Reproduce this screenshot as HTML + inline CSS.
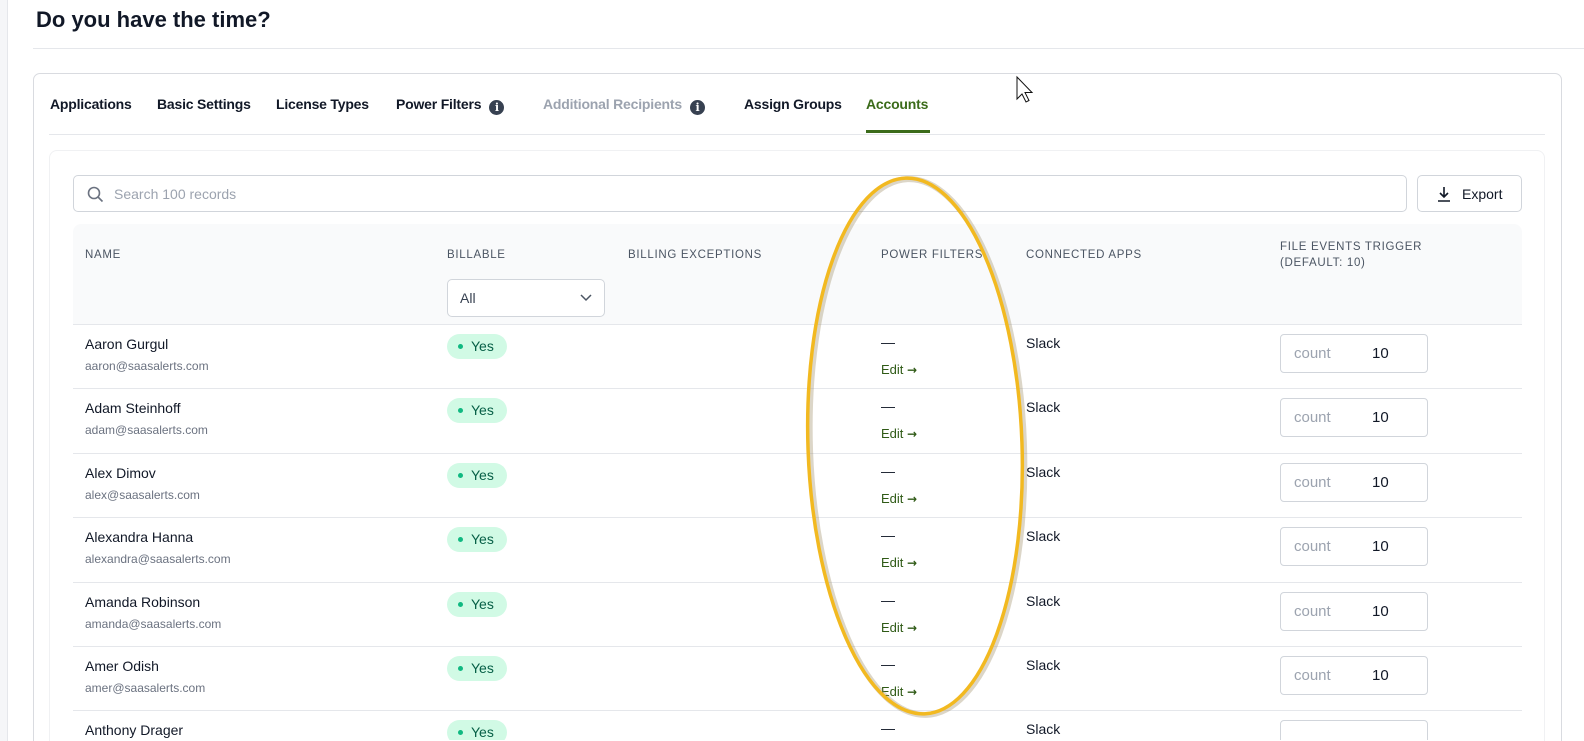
<!DOCTYPE html>
<html style="width:1584px;height:741px;overflow:hidden"><head><style>
*{box-sizing:border-box;margin:0;padding:0}
body{width:1584px;height:741px;overflow:hidden;background:#fff;font-family:"Liberation Sans",sans-serif;color:#111827;position:relative}
.strip{position:absolute;left:0;top:0;width:8px;height:741px;background:#f5f6f8;border-right:1px solid #e5e7eb}
h1{position:absolute;left:36px;top:7px;font-size:22px;font-weight:bold;color:#111827}
.hr{position:absolute;left:33px;right:0;top:48px;height:1px;background:#e5e7eb}
.card{position:absolute;left:33px;top:73px;width:1529px;height:690px;border:1px solid #d9dbe0;border-radius:7px}
.tab{position:absolute;top:96px;font-size:14px;font-weight:bold;color:#111827;white-space:nowrap;letter-spacing:-.2px}
.info{display:inline-block;width:15px;height:15px;border-radius:50%;background:#374151;color:#fff;font-size:11px;text-align:center;line-height:15px;vertical-align:-2px;margin-left:8px;font-family:"DejaVu Serif",serif;font-weight:bold}
.sep{position:absolute;left:49px;top:134px;width:1496px;height:1px;background:#e5e7eb}
.ul{position:absolute;left:866px;top:130px;width:64px;height:3px;background:#3b6b1a}
.panel{position:absolute;left:49px;top:150px;width:1496px;height:610px;border:1px solid #f0f1f3;border-radius:8px}
.search{position:absolute;left:73px;top:175px;width:1334px;height:37px;border:1px solid #d1d5db;border-radius:5px}
.search span{position:absolute;left:40px;top:10px;font-size:14px;color:#9ca3af}
.export{position:absolute;left:1417px;top:175px;width:105px;height:37px;border:1px solid #d1d5db;border-radius:5px;font-size:14px;color:#111827}
.thead{position:absolute;left:73px;top:224px;width:1449px;height:101px;background:#f9fafb;border-radius:8px 8px 0 0;border-bottom:1px solid #e5e7eb}
.th{position:absolute;font-size:11.5px;letter-spacing:.7px;color:#4b5563;line-height:16px}
.sel{position:absolute;left:447px;top:279px;width:158px;height:38px;border:1px solid #d1d5db;border-radius:5px;background:#fff;font-size:14px;color:#374151}
.row{position:absolute;left:73px;width:1449px;height:64.4px;border-bottom:1px solid #e5e7eb}
.nm{position:absolute;left:12px;top:11px;font-size:14px;color:#111827}
.em{position:absolute;left:12px;top:34px;font-size:12px;color:#6b7280}
.yes{position:absolute;left:374px;top:9px;width:60px;height:25px;border-radius:13px;background:#d1fae5;font-size:14px;color:#065f46;line-height:25px;padding-left:24px}
.yes:before{content:"";position:absolute;left:11px;top:10px;width:5px;height:5px;border-radius:50%;background:#10b981}
.dash{position:absolute;left:808px;top:9px;font-size:14px}
.edit{position:absolute;left:808px;top:37px;font-size:13px;color:#2f5a16}
.edit b{font-family:"DejaVu Sans",sans-serif;font-size:12px}
.app{position:absolute;left:953px;top:10px;font-size:14px}
.cnt{position:absolute;left:1207px;top:9px;width:148px;height:39px;border:1px solid #d1d5db;border-radius:4px;font-size:15px}
.cnt i{font-style:normal;position:absolute;left:13px;top:10px;color:#9ca3af}
.cnt b{font-weight:normal;position:absolute;left:91px;top:10px;color:#111827}
</style></head><body>
<div class="strip"></div>
<h1>Do you have the time?</h1>
<div class="hr"></div>
<div class="card"></div>
<div class="tab" style="left:50px">Applications</div>
<div class="tab" style="left:157px">Basic Settings</div>
<div class="tab" style="left:276px">License Types</div>
<div class="tab" style="left:396px">Power Filters<span class="info">i</span></div>
<div class="tab" style="left:543px;color:#9ca3af">Additional Recipients<span class="info">i</span></div>
<div class="tab" style="left:744px">Assign Groups</div>
<div class="tab" style="left:866px;color:#3b6b1a">Accounts</div>
<div class="sep"></div><div class="ul"></div>
<div class="panel"></div>
<div class="search"><svg style="position:absolute;left:13px;top:10px" width="17" height="17" viewBox="0 0 17 17"><circle cx="7" cy="7" r="5.5" fill="none" stroke="#6b7280" stroke-width="1.6"/><path d="M11 11l4.5 4.5" stroke="#6b7280" stroke-width="1.6"/></svg><span>Search 100 records</span></div>
<div class="export"><svg style="position:absolute;left:18px;top:10px" width="16" height="16" viewBox="0 0 16 16"><path d="M8 1v9M4 7l4 4 4-4M2 15h12" fill="none" stroke="#111827" stroke-width="1.6"/></svg><span style="position:absolute;left:44px;top:10px">Export</span></div>
<div class="thead"></div>
<div class="th" style="left:85px;top:247px">NAME</div>
<div class="th" style="left:447px;top:247px">BILLABLE</div>
<div class="th" style="left:628px;top:247px">BILLING EXCEPTIONS</div>
<div class="th" style="left:881px;top:247px">POWER FILTERS</div>
<div class="th" style="left:1026px;top:247px">CONNECTED APPS</div>
<div class="th" style="left:1280px;top:239px">FILE EVENTS TRIGGER<br>(DEFAULT: 10)</div>
<div class="sel"><span style="position:absolute;left:12px;top:10px">All</span><svg style="position:absolute;left:132px;top:14px" width="12" height="8" viewBox="0 0 12 8"><path d="M1 1l5 5 5-5" fill="none" stroke="#4b5563" stroke-width="1.5"/></svg></div>

<div class="row" style="top:325px"><div class="nm">Aaron Gurgul</div><div class="em">aaron@saasalerts.com</div><div class="yes">Yes</div><div class="dash">—</div><div class="edit">Edit <b>→</b></div><div class="app">Slack</div><div class="cnt"><i>count</i><b>10</b></div></div>
<div class="row" style="top:389.4px"><div class="nm">Adam Steinhoff</div><div class="em">adam@saasalerts.com</div><div class="yes">Yes</div><div class="dash">—</div><div class="edit">Edit <b>→</b></div><div class="app">Slack</div><div class="cnt"><i>count</i><b>10</b></div></div>
<div class="row" style="top:453.8px"><div class="nm">Alex Dimov</div><div class="em">alex@saasalerts.com</div><div class="yes">Yes</div><div class="dash">—</div><div class="edit">Edit <b>→</b></div><div class="app">Slack</div><div class="cnt"><i>count</i><b>10</b></div></div>
<div class="row" style="top:518.2px"><div class="nm">Alexandra Hanna</div><div class="em">alexandra@saasalerts.com</div><div class="yes">Yes</div><div class="dash">—</div><div class="edit">Edit <b>→</b></div><div class="app">Slack</div><div class="cnt"><i>count</i><b>10</b></div></div>
<div class="row" style="top:582.6px"><div class="nm">Amanda Robinson</div><div class="em">amanda@saasalerts.com</div><div class="yes">Yes</div><div class="dash">—</div><div class="edit">Edit <b>→</b></div><div class="app">Slack</div><div class="cnt"><i>count</i><b>10</b></div></div>
<div class="row" style="top:647px"><div class="nm">Amer Odish</div><div class="em">amer@saasalerts.com</div><div class="yes">Yes</div><div class="dash">—</div><div class="edit">Edit <b>→</b></div><div class="app">Slack</div><div class="cnt"><i>count</i><b>10</b></div></div>
<div class="row" style="top:711.4px;border-bottom:none;height:29px;overflow:hidden"><div class="nm">Anthony Drager</div><div class="yes">Yes</div><div class="dash">—</div><div class="app">Slack</div><div class="cnt"></div></div>

<svg style="position:absolute;left:0;top:0" width="1584" height="741">
<ellipse cx="917" cy="447" rx="107" ry="268" transform="rotate(-2 917 447)" fill="none" stroke="#9a8a60" stroke-opacity=".35" stroke-width="6"/>
<ellipse cx="915" cy="446" rx="107" ry="268" transform="rotate(-2 915 446)" fill="none" stroke="#f2b920" stroke-width="3.5"/>
<path d="M1017 77v22l5-5 4 8 3-1.5-4-8h7z" fill="#fff" stroke="#111" stroke-width="1"/>
</svg>
</body></html>
